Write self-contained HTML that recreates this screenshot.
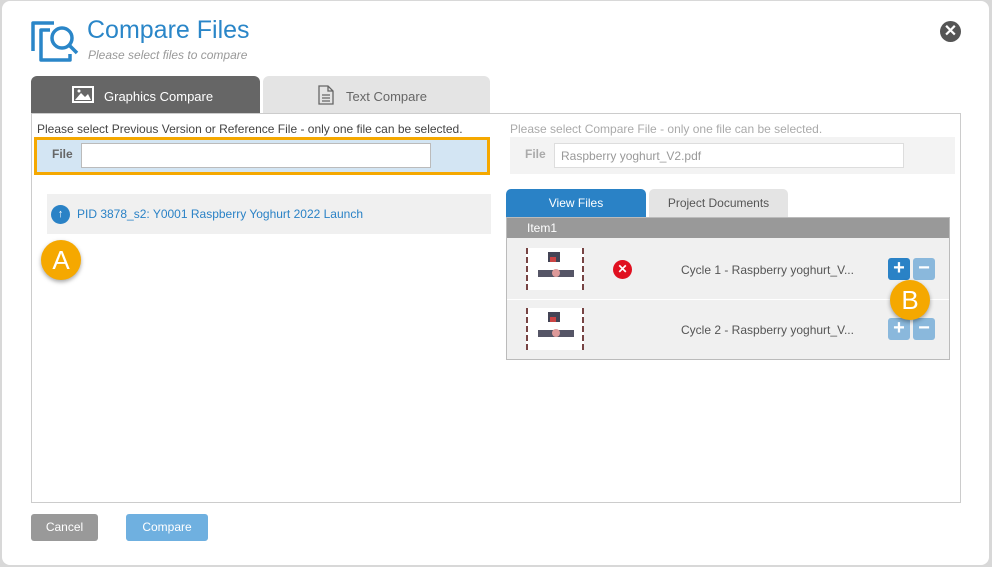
<!DOCTYPE html>
<html><head><style>
*{box-sizing:border-box;margin:0;padding:0}
body{width:992px;height:567px;background:#d8d8d8;font-family:"Liberation Sans",sans-serif;position:relative;overflow:hidden}
.dlg{position:absolute;left:2px;top:1px;width:987px;height:564px;background:#fff;border-radius:8px}
.a{position:absolute}
.t{font-size:12px;white-space:nowrap}
.badge{position:absolute;width:40px;height:40px;border-radius:50%;background:#f5a800;color:#fff;font-size:26px;text-align:center;line-height:40px;box-shadow:0 2px 4px rgba(0,0,0,.35)}
.btn{position:absolute;width:22px;height:22px;border-radius:3px;color:#fff;font-weight:bold;font-size:20px;line-height:21px;text-align:center}
.thumb{position:absolute;width:58px;height:42px;background:#fff;border-left:2px dashed #744;border-right:2px dashed #744}
.thumb i{position:absolute}
</style></head><body>
<div class="dlg"></div>
<svg class="a" style="left:30px;top:18px" width="56" height="46" viewBox="0 0 56 46" fill="none" stroke="#2a86c8" stroke-width="3.5" stroke-linejoin="round">
<path d="M3 33 V5 H24"/><path d="M20 12 H11 V42 H40 V36"/><circle cx="32" cy="20" r="10"/><path d="M39 27 L47 35"/></svg>
<div class="a" style="left:87px;top:16px;font-size:25px;color:#2a86c8">Compare Files</div>
<div class="a t" style="left:88px;top:48px;font-size:12px;color:#999;font-style:italic">Please select files to compare</div>
<div class="a" style="left:940px;top:21px;width:21px;height:21px;border-radius:50%;background:#555;color:#fff;font-size:16px;font-weight:bold;text-align:center;line-height:21px">✕</div>
<div class="a" style="left:31px;top:76px;width:229px;height:37px;background:#666;border-radius:6px 6px 0 0"></div>
<svg class="a" style="left:72px;top:86px" width="22" height="17"><rect x="1" y="1" width="20" height="15" fill="none" stroke="#fff" stroke-width="2"/><path d="M3 14 L9 7 L13 11 L16 8 L19 14Z" fill="#fff"/><circle cx="7" cy="5" r="1.5" fill="#fff"/></svg>
<div class="a t" style="left:104px;top:89px;color:#fff;font-size:13px">Graphics Compare</div>
<div class="a" style="left:263px;top:76px;width:227px;height:37px;background:#e4e4e4;border-radius:6px 6px 0 0"></div>
<svg class="a" style="left:318px;top:85px" width="16" height="20"><path d="M1 1 H10 L15 6 V19 H1Z M10 1 V6 H15 M4 10 H12 M4 13 H12 M4 16 H12" fill="none" stroke="#666" stroke-width="1.3"/></svg>
<div class="a t" style="left:346px;top:89px;color:#666;font-size:13px">Text Compare</div>
<div class="a" style="left:31px;top:113px;width:930px;height:390px;border:1px solid #ccc"></div>
<div class="a t" style="left:37px;top:122px;color:#444">Please select Previous Version or Reference File - only one file can be selected.</div>
<div class="a" style="left:34px;top:137px;width:456px;height:38px;border:3px solid #f5a800;background:#d3e5f3"></div>
<div class="a t" style="left:52px;top:147px;color:#666;font-weight:bold">File</div>
<div class="a" style="left:81px;top:143px;width:350px;height:25px;background:#fff;border:1px solid #bbb"></div>
<div class="a" style="left:47px;top:194px;width:444px;height:40px;background:#f0f0f0"></div>
<div class="a" style="left:51px;top:205px;width:19px;height:19px;border-radius:50%;background:#2a82c6;color:#fff;font-size:11px;font-weight:bold;text-align:center;line-height:19px">↑</div>
<div class="a t" style="left:77px;top:207px;color:#2a82c6">PID 3878_s2: Y0001 Raspberry Yoghurt 2022 Launch</div>
<div class="badge" style="left:41px;top:240px">A</div>
<div class="a t" style="left:510px;top:122px;color:#aaa">Please select Compare File - only one file can be selected.</div>
<div class="a" style="left:510px;top:137px;width:445px;height:37px;background:#f3f3f3"></div>
<div class="a t" style="left:525px;top:147px;color:#aaa;font-weight:bold">File</div>
<div class="a" style="left:554px;top:143px;width:350px;height:25px;background:#fff;border:1px solid #ddd"></div>
<div class="a t" style="left:561px;top:149px;color:#999">Raspberry yoghurt_V2.pdf</div>
<div class="a" style="left:506px;top:189px;width:140px;height:28px;background:#2a82c6;border-radius:5px 5px 0 0;color:#fff;font-size:12px;text-align:center;line-height:28px">View Files</div>
<div class="a" style="left:649px;top:189px;width:139px;height:28px;background:#e4e4e4;border-radius:5px 5px 0 0;color:#555;font-size:12px;text-align:center;line-height:28px">Project Documents</div>
<div class="a" style="left:506px;top:217px;width:444px;height:143px;border:1px solid #bbb;background:#f0f0f0"></div>
<div class="a" style="left:507px;top:218px;width:442px;height:20px;background:#999;color:#fff;font-size:12px;line-height:20px;padding-left:20px">Item1</div>
<div class="a" style="left:507px;top:299px;width:442px;height:1px;background:#fff"></div>
<div class="thumb" style="left:526px;top:248px"><i style="left:20px;top:4px;width:12px;height:10px;background:#445"></i><i style="left:22px;top:9px;width:6px;height:5px;background:#c44"></i><i style="left:10px;top:22px;width:36px;height:7px;background:#556"></i><i style="left:24px;top:21px;width:8px;height:8px;background:#d99;border-radius:50%"></i></div>
<div class="thumb" style="left:526px;top:308px"><i style="left:20px;top:4px;width:12px;height:10px;background:#445"></i><i style="left:22px;top:9px;width:6px;height:5px;background:#c44"></i><i style="left:10px;top:22px;width:36px;height:7px;background:#556"></i><i style="left:24px;top:21px;width:8px;height:8px;background:#d99;border-radius:50%"></i></div>
<div class="a" style="left:613px;top:260px;width:19px;height:19px;border-radius:50%;background:#e01020;color:#fff;font-size:12px;font-weight:bold;text-align:center;line-height:19px">✕</div>
<div class="a t" style="left:681px;top:263px;color:#555">Cycle 1 - Raspberry yoghurt_V...</div>
<div class="a t" style="left:681px;top:323px;color:#555">Cycle 2 - Raspberry yoghurt_V...</div>
<div class="btn" style="left:888px;top:258px;background:#2a82c6">+</div>
<div class="btn" style="left:913px;top:258px;background:#8ab8dc">−</div>
<div class="btn" style="left:888px;top:318px;background:#8ab8dc">+</div>
<div class="btn" style="left:913px;top:318px;background:#8ab8dc">−</div>
<div class="badge" style="left:890px;top:280px">B</div>
<div class="a" style="left:31px;top:514px;width:67px;height:27px;background:#999;border-radius:3px;color:#fff;font-size:12px;text-align:center;line-height:27px">Cancel</div>
<div class="a" style="left:126px;top:514px;width:82px;height:27px;background:#6fb0e0;border-radius:3px;color:#fff;font-size:12px;text-align:center;line-height:27px">Compare</div>
</body></html>
